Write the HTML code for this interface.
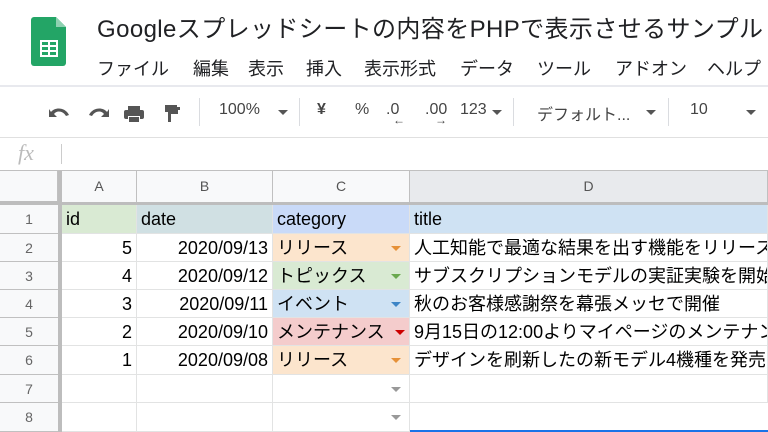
<!DOCTYPE html>
<html><head><meta charset="utf-8"><style>
*{margin:0;padding:0;box-sizing:border-box}
body{width:768px;height:432px;overflow:hidden;background:#fff;font-family:"Liberation Sans","Noto Sans CJK JP",sans-serif;position:relative;color:#202124}
.a{position:absolute;white-space:nowrap}
.m{font-size:18px;top:55px;color:#202124}
.t{font-size:16px;color:#444;top:101px}
.sep{position:absolute;top:98px;width:1px;height:28px;background:#dadce0}
.arr{position:absolute;width:0;height:0;border-left:5px solid transparent;border-right:5px solid transparent;border-top:5px solid #555}
.c{position:absolute;font-size:18px;line-height:28px;color:#000;overflow:hidden;white-space:nowrap;padding:0 4px;border-right:1px solid #e2e3e3;border-bottom:1px solid #e2e3e3}
.rh{position:absolute;left:0;width:58px;text-align:center;font-size:14px;color:#666;line-height:28px;background:#f8f9fa;border-bottom:1px solid #c0c0c0}
.ch{position:absolute;top:171px;height:31px;text-align:center;font-size:14px;color:#555;line-height:31px;background:#f8f9fa;border-right:1px solid #c0c0c0}
.dd{position:absolute;right:8px;top:12px;width:0;height:0;border-left:5px solid transparent;border-right:5px solid transparent;border-top:5px solid}
</style></head><body>
<svg class="a" style="left:31px;top:17px" width="36" height="50" viewBox="0 0 36 50">
<path d="M3 0H25L35 10V46a3 3 0 0 1-3 3H3a3 3 0 0 1-3-3V3a3 3 0 0 1 3-3z" fill="#23a566"/>
<path d="M25 0V10H35z" fill="#8ed1b1"/>
<rect x="9" y="23" width="18" height="17" fill="#fff"/>
<g fill="#23a566"><rect x="11" y="25" width="6" height="3"/><rect x="19" y="25" width="6" height="3"/><rect x="11" y="30" width="6" height="3"/><rect x="19" y="30" width="6" height="3"/><rect x="11" y="35" width="6" height="3"/><rect x="19" y="35" width="6" height="3"/></g>
</svg>
<div class="a" style="left:97px;top:9px;font-size:24px;letter-spacing:0.4px">Googleスプレッドシートの内容をPHPで表示させるサンプル</div>
<div class="a m" style="left:97px">ファイル</div>
<div class="a m" style="left:193px">編集</div>
<div class="a m" style="left:248px">表示</div>
<div class="a m" style="left:306px">挿入</div>
<div class="a m" style="left:364px">表示形式</div>
<div class="a m" style="left:460px">データ</div>
<div class="a m" style="left:537px">ツール</div>
<div class="a m" style="left:615px">アドオン</div>
<div class="a m" style="left:707px">ヘルプ</div>
<div class="a" style="left:0;top:85px;width:768px;height:2px;background:#e8e9ee"></div>
<svg class="a" style="left:47px;top:103px" width="140" height="20" viewBox="0 0 140 20" fill="#555">
<path d="M4 9 C8 4 18 4 22 12 L19 13 C16 8 10 7 7 11 L10 14 H2 V6z"/>
<path d="M60 9 C56 4 46 4 42 12 L45 13 C48 8 54 7 57 11 L54 14 H62 V6z"/>
<rect x="81" y="3" width="12" height="4"/><rect x="77" y="7" width="20" height="9" rx="2"/><rect x="81" y="13" width="12" height="6" fill="#fff"/><rect x="82" y="14" width="10" height="5"/>
<rect x="118" y="2" width="12" height="7"/><rect x="130" y="4" width="3" height="3"/><path d="M131 5V11H124V19H121V9H128V5z"/>
</svg>
<div class="sep" style="left:199px"></div>
<div class="a t" style="left:219px">100%</div>
<div class="arr" style="left:278px;top:110px"></div>
<div class="sep" style="left:299px"></div>
<div class="a t" style="left:317px;font-weight:bold">¥</div>
<div class="a t" style="left:355px">%</div>
<div class="a t" style="left:386px">.0</div>
<div class="a" style="left:393px;top:113px;font-size:12px;font-weight:bold;color:#444">←</div>
<div class="a t" style="left:425px">.00</div>
<div class="a" style="left:435px;top:113px;font-size:12px;font-weight:bold;color:#444">→</div>
<div class="a t" style="left:460px">123</div>
<div class="arr" style="left:492px;top:110px"></div>
<div class="sep" style="left:513px"></div>
<div class="a t" style="left:537px">デフォルト...</div>
<div class="arr" style="left:646px;top:110px"></div>
<div class="sep" style="left:668px"></div>
<div class="a t" style="left:690px">10</div>
<div class="arr" style="left:746px;top:110px"></div>
<div class="a" style="left:0;top:137px;width:768px;height:1px;background:#e0e0e0"></div>
<div class="a" style="left:18px;top:140px;font-size:22px;font-style:italic;color:#bbb;font-family:'Liberation Serif',serif">fx</div>
<div class="a" style="left:61px;top:144px;width:1px;height:20px;background:#ccc"></div>
<div class="a" style="left:0;top:170px;width:768px;height:1px;background:#c0c0c0"></div>
<div class="a" style="left:0;top:171px;width:58px;height:31px;background:#f8f9fa;border-right:1px solid #c0c0c0"></div>
<div class="a" style="left:58px;top:171px;width:4px;height:261px;background:#bdbdbd"></div>
<div class="a" style="left:0;top:201px;width:768px;height:4px;background:#bdbdbd"></div>
<div class="ch" style="left:62px;width:75px">A</div>
<div class="ch" style="left:137px;width:136px">B</div>
<div class="ch" style="left:273px;width:137px">C</div>
<div class="ch" style="left:410px;width:358px;background:#e8eaed">D</div>
<div class="rh" style="top:205px;height:29px">1</div>
<div class="rh" style="top:234px;height:28px">2</div>
<div class="rh" style="top:262px;height:28px">3</div>
<div class="rh" style="top:290px;height:28px">4</div>
<div class="rh" style="top:318px;height:28px">5</div>
<div class="rh" style="top:346px;height:29px">6</div>
<div class="rh" style="top:375px;height:28px">7</div>
<div class="rh" style="top:403px;height:29px">8</div>
<div class="c" style="left:62px;top:205px;width:75px;height:29px;background:#d9ead3">id</div>
<div class="c" style="left:137px;top:205px;width:136px;height:29px;background:#d0e0e3">date</div>
<div class="c" style="left:273px;top:205px;width:137px;height:29px;background:#c9daf8">category</div>
<div class="c" style="left:410px;top:205px;width:358px;height:29px;background:#cfe2f3">title</div>
<div class="c" style="left:62px;top:234px;width:75px;height:28px;text-align:right">5</div>
<div class="c" style="left:137px;top:234px;width:136px;height:28px;text-align:right">2020/09/13</div>
<div class="c" style="left:273px;top:234px;width:137px;height:28px;background:#fce5cd">リリース<i class="dd" style="color:#e69138"></i></div>
<div class="c" style="left:410px;top:234px;width:358px;height:28px">人工知能で最適な結果を出す機能をリリース</div>
<div class="c" style="left:62px;top:262px;width:75px;height:28px;text-align:right">4</div>
<div class="c" style="left:137px;top:262px;width:136px;height:28px;text-align:right">2020/09/12</div>
<div class="c" style="left:273px;top:262px;width:137px;height:28px;background:#d9ead3">トピックス<i class="dd" style="color:#6aa84f"></i></div>
<div class="c" style="left:410px;top:262px;width:358px;height:28px">サブスクリプションモデルの実証実験を開始</div>
<div class="c" style="left:62px;top:290px;width:75px;height:28px;text-align:right">3</div>
<div class="c" style="left:137px;top:290px;width:136px;height:28px;text-align:right">2020/09/11</div>
<div class="c" style="left:273px;top:290px;width:137px;height:28px;background:#cfe2f3">イベント<i class="dd" style="color:#3d85c6"></i></div>
<div class="c" style="left:410px;top:290px;width:358px;height:28px">秋のお客様感謝祭を幕張メッセで開催</div>
<div class="c" style="left:62px;top:318px;width:75px;height:28px;text-align:right">2</div>
<div class="c" style="left:137px;top:318px;width:136px;height:28px;text-align:right">2020/09/10</div>
<div class="c" style="left:273px;top:318px;width:137px;height:28px;background:#f4cccc">メンテナンス<i class="dd" style="color:#cc0000;right:4px"></i></div>
<div class="c" style="left:410px;top:318px;width:358px;height:28px">9月15日の12:00よりマイページのメンテナンス</div>
<div class="c" style="left:62px;top:346px;width:75px;height:29px;text-align:right">1</div>
<div class="c" style="left:137px;top:346px;width:136px;height:29px;text-align:right">2020/09/08</div>
<div class="c" style="left:273px;top:346px;width:137px;height:29px;background:#fce5cd">リリース<i class="dd" style="color:#e69138"></i></div>
<div class="c" style="left:410px;top:346px;width:358px;height:29px">デザインを刷新したの新モデル4機種を発売</div>
<div class="c" style="left:62px;top:375px;width:75px;height:28px"></div>
<div class="c" style="left:137px;top:375px;width:136px;height:28px"></div>
<div class="c" style="left:273px;top:375px;width:137px;height:28px"><i class="dd" style="color:#999"></i></div>
<div class="c" style="left:410px;top:375px;width:358px;height:28px"></div>
<div class="c" style="left:62px;top:403px;width:75px;height:29px"></div>
<div class="c" style="left:137px;top:403px;width:136px;height:29px"></div>
<div class="c" style="left:273px;top:403px;width:137px;height:29px"><i class="dd" style="color:#999"></i></div>
<div class="a" style="left:410px;top:430px;width:358px;height:2px;background:#1a73e8"></div>
</body></html>
